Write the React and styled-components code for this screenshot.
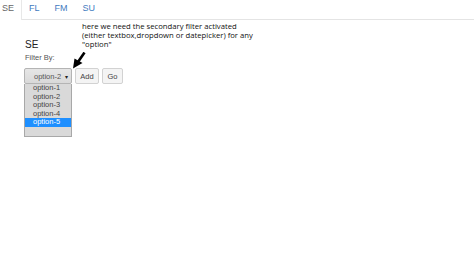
import React from "react";
import styled, { createGlobalStyle } from "styled-components";

const Global = createGlobalStyle`
  html, body {
    margin: 0;
    padding: 0;
    background: #fff;
    font-family: "Liberation Sans", Arial, sans-serif;
  }
`;

const tabs = ["SE", "FL", "FM", "SU"];
const options = ["option-1", "option-2", "option-3", "option-4", "option-5"];

export default function App() {
  return (
    <Page>
      <Global />
      <Tabs>
        {tabs.map((t, i) => (
          <Tab key={t} $active={i === 0}>
            {t}
          </Tab>
        ))}
      </Tabs>
      <Note>
        here we need the secondary filter activated
        <br />
        (either textbox,dropdown or datepicker) for any
        <br />
        "option"
      </Note>
      <Arrow width="16" height="18" viewBox="0 0 16 18">
        <line x1="12.5" y1="0.5" x2="6" y2="10" stroke="#000" strokeWidth="2.6" />
        <polygon points="1,16.5 2.5,6.5 10.5,11" fill="#000" />
      </Arrow>
      <Content>
        <Heading>SE</Heading>
        <Label>Filter By:</Label>
        <Controls>
          <SelectWrap>
            <Select>
              <span>option-2</span>
              <Caret>▾</Caret>
            </Select>
            <List>
              {options.map((o) => (
                <Option key={o} $selected={o === "option-5"}>
                  {o}
                </Option>
              ))}
            </List>
          </SelectWrap>
          <Button $w={24}>Add</Button>
          <Button $w={21}>Go</Button>
        </Controls>
      </Content>
    </Page>
  );
}

const Page = styled.div`
  position: relative;
  width: 474px;
  height: 268px;
  overflow: hidden;
`;

const Tabs = styled.ul`
  display: flex;
  list-style: none;
  margin: 0 0 0 -5px;
  padding: 0;
  height: 19px;
  border-bottom: 1px solid #e4e4e4;
`;

const Tab = styled.li`
  padding: 0 7px;
  line-height: 17px;
  font-size: 9px;
  color: ${(p) => (p.$active ? "#666" : "#3f7bc0")};
  background: #fff;
  border-right: 1px solid ${(p) => (p.$active ? "#e8e8e8" : "transparent")};
  margin-bottom: ${(p) => (p.$active ? "-1px" : "0")};
  height: ${(p) => (p.$active ? "20px" : "19px")};
`;

const Note = styled.div`
  position: absolute;
  left: 82px;
  top: 22px;
  font-family: "Open Sans", sans-serif;
  font-size: 7.7px;
  line-height: 9px;
  color: #111;
  white-space: nowrap;
`;

const Arrow = styled.svg`
  position: absolute;
  left: 72px;
  top: 52px;
`;

const Content = styled.div`
  padding: 19px 0 0 25px;
  display: flex;
  flex-direction: column;
`;

const Heading = styled.div`
  font-size: 10px;
  line-height: 12px;
  color: #222;
`;

const Label = styled.div`
  margin-top: 2px;
  font-size: 7.5px;
  line-height: 9px;
  color: #555;
`;

const Controls = styled.div`
  display: flex;
  gap: 3px;
  margin-top: 6px;
  margin-left: -1px;
`;

const SelectWrap = styled.div`
  position: relative;
`;

const Select = styled.div`
  box-sizing: border-box;
  width: 48px;
  height: 16px;
  display: flex;
  align-items: center;
  justify-content: space-between;
  padding: 0 3px 0 9px;
  background: linear-gradient(#e6e6e6, #d9d9d9);
  border: 1px solid #b4b4b4;
  border-radius: 2px;
  font-size: 7.5px;
  color: #555;
`;

const Caret = styled.span`
  font-size: 6px;
  color: #222;
`;

const List = styled.div`
  position: absolute;
  left: 0;
  top: 16px;
  box-sizing: border-box;
  width: 48px;
  height: 53px;
  background: #d9d9d9;
  border: 1px solid #a8a8a8;
  border-top: none;
`;

const Option = styled.div`
  height: 8.5px;
  line-height: 8.5px;
  padding-left: 8px;
  font-size: 7.5px;
  color: ${(p) => (p.$selected ? "#fff" : "#444")};
  background: ${(p) => (p.$selected ? "#1e8fff" : "transparent")};
`;

const Button = styled.div`
  box-sizing: border-box;
  width: ${(p) => p.$w}px;
  height: 16px;
  display: flex;
  align-items: center;
  justify-content: center;
  background: #f4f4f4;
  border: 1px solid #d2d2d2;
  border-radius: 2px;
  font-size: 7.5px;
  color: #444;
`;
